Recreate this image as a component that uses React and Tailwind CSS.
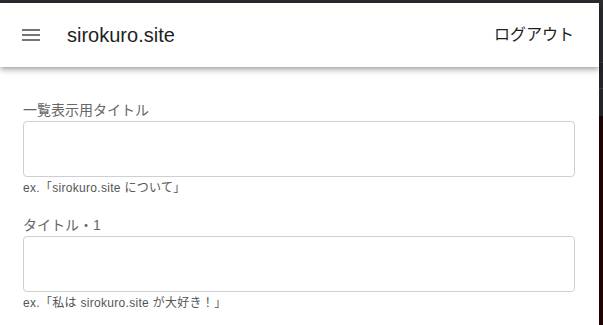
import React from 'react';

const FIELDS = [
  { label: '一覧表示用タイトル', hint: 'ex.「sirokuro.site について」' },
  { label: 'タイトル・1', hint: 'ex.「私は sirokuro.site が大好き！」' },
];

function MenuIcon() {
  return (
    <svg width="24" height="24" viewBox="0 0 24 24" className="shrink-0">
      <path d="M3 6h18v2H3zM3 11h18v2H3zM3 16h18v2H3z" fill="#757575" />
    </svg>
  );
}

export default function App() {
  return (
    <div
      className="flex w-[603px] h-[325px] overflow-hidden bg-white"
      style={{ fontFamily: '"Liberation Sans", "Noto Sans CJK JP", sans-serif' }}
    >
      <div className="flex-1 flex flex-col min-w-0">
        <div className="h-[3px] bg-[#2a2c32] shrink-0" />
        <header className="relative z-10 h-[64px] shrink-0 flex items-center pl-[19px] pr-[25px] bg-white shadow-[0_2px_4px_-1px_rgba(0,0,0,0.2),0_4px_5px_0_rgba(0,0,0,0.14),0_1px_10px_0_rgba(0,0,0,0.12)]">
          <MenuIcon />
          <span className="ml-[24px] text-[20px] text-[#1f1f1f]">sirokuro.site</span>
          <span className="ml-auto text-[16px] text-[#1f1f1f]">ログアウト</span>
        </header>
        <main className="px-[23px] pt-[33px] pr-[24px]">
          {FIELDS.map((f, i) => (
            <div key={f.label} className={i > 0 ? 'mt-[19px]' : ''}>
              <div className="text-[14px] leading-[20px] text-[#666666] mb-[1px]">{f.label}</div>
              <div className="h-[56px] rounded-[4px] border border-[#cfcfcf]" />
              <div className="mt-[3px] text-[12px] leading-[16px] tracking-[0.3px] text-[#555555]">{f.hint}</div>
            </div>
          ))}
        </main>
      </div>
      <div className="w-[4px] shrink-0 flex flex-col">
        <div className="h-[62px] bg-[#2a2b2e]" />
        <div className="h-px bg-[#3a3b3e]" />
        <div className="h-[25px] bg-[#232427]" />
        <div className="h-px bg-[#3a3b3e]" />
        <div className="h-[27px] bg-[#232427]" />
        <div className="flex-1 bg-[#1e0202]" />
      </div>
    </div>
  );
}
